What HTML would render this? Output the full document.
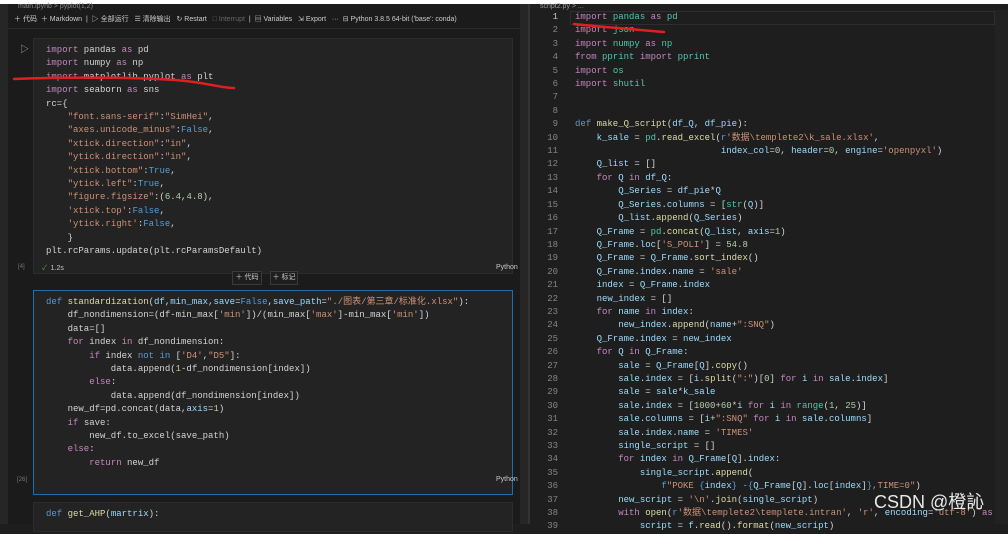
<!DOCTYPE html>
<html><head><meta charset="utf-8"><style>
*{margin:0;padding:0;box-sizing:border-box}
body{width:1008px;height:524px;overflow:hidden;background:#1e1e1e;position:relative;font-family:"Liberation Sans","Noto Sans CJK SC",sans-serif}
.mono{font-family:"Liberation Mono","Noto Sans CJK SC",monospace;font-size:9px;line-height:13.4px;white-space:pre;color:#d4d4d4}
.abs{position:absolute}
.k{color:#c586c0}.m{color:#4ec9b0}.s{color:#ce9178}.b{color:#569cd6}.f{color:#dcdcaa}.v{color:#9cdcfe}.n{color:#b5cea8}
.ln{color:#858585;text-align:right;width:20px}
.small{font-size:7px;color:#c8c8c8}
</style></head><body>
<div class="abs" style="left:0;top:0;width:1008px;height:4px;background:#fff"></div>
<!-- left panel -->
<div class="abs" style="left:0;top:4px;width:528px;height:520px;background:#1b1b1b"></div>
<div class="abs" style="left:0;top:4px;width:8px;height:520px;background:#262626"></div>
<div class="abs" style="left:520px;top:4px;width:8px;height:520px;background:#262626"></div>
<div class="abs" style="left:528px;top:4px;width:2px;height:520px;background:#333"></div>
<div class="abs small" style="left:18px;top:3px;color:#888">main.ipynb &gt; pyplot(1,2)</div>
<div class="abs small" style="left:14px;top:14px;white-space:nowrap;color:#ccc">＋ 代码 &nbsp;＋ Markdown &nbsp;| &nbsp;▷ 全部运行 &nbsp; ☰ 清除输出 &nbsp; ↻ Restart &nbsp; <span style="color:#666">□ Interrupt</span> &nbsp;| &nbsp;▤ Variables &nbsp; ⇲ Export &nbsp; ··· &nbsp;⊟ Python 3.8.5 64-bit ('base': conda)</div>
<div class="abs" style="left:8px;top:28px;width:512px;height:1px;background:#2a2a2a"></div>
<div class="abs" style="left:20px;top:42px;color:#aaa;font-size:9px">▷</div>
<div class="abs" style="left:33px;top:38px;width:480px;height:236px;background:#232323;border:1px solid #2c2c2c"></div>
<div class="abs mono" style="left:46px;top:44px"><span class="k">import</span> pandas <span class="k">as</span> pd
<span class="k">import</span> numpy <span class="k">as</span> np
<span class="k">import</span> matplotlib.pyplot <span class="k">as</span> plt
<span class="k">import</span> seaborn <span class="k">as</span> sns
rc={
    <span class="s">"font.sans-serif"</span>:<span class="s">"SimHei"</span>,
    <span class="s">"axes.unicode_minus"</span>:<span class="b">False</span>,
    <span class="s">"xtick.direction"</span>:<span class="s">"in"</span>,
    <span class="s">"ytick.direction"</span>:<span class="s">"in"</span>,
    <span class="s">"xtick.bottom"</span>:<span class="b">True</span>,
    <span class="s">"ytick.left"</span>:<span class="b">True</span>,
    <span class="s">"figure.figsize"</span>:(<span class="n">6.4</span>,<span class="n">4.8</span>),
    <span class="s">'xtick.top'</span>:<span class="b">False</span>,
    <span class="s">'ytick.right'</span>:<span class="b">False</span>,
    }
plt.rcParams.update(plt.rcParamsDefault)</div>
<div class="abs small" style="left:18px;top:264px;color:#777;font-size:6px">[4]</div>
<div class="abs small" style="left:42px;top:263px"><span style="color:#4caf50">✓</span> &nbsp;1.2s</div>
<div class="abs small" style="left:496px;top:264px">Python</div>
<div class="abs small" style="left:232px;top:271px;width:30px;height:14px;border:1px solid #3a3a3a;background:#1e1e1e;text-align:center;line-height:12px">＋ 代码</div>
<div class="abs small" style="left:270px;top:271px;width:28px;height:14px;border:1px solid #3a3a3a;background:#1e1e1e;text-align:center;line-height:12px">＋ 标记</div>
<div class="abs" style="left:33px;top:290px;width:480px;height:205px;background:#232323;border:1px solid #1f6fb0"></div>
<div class="abs mono" style="left:46px;top:296px"><span class="b">def</span> <span class="f">standardization</span>(<span class="v">df</span>,<span class="v">min_max</span>,<span class="v">save</span>=<span class="b">False</span>,<span class="v">save_path</span>=<span class="s">"./图表/第三章/标准化.xlsx"</span>):
    df_nondimension=(df-min_max[<span class="s">'min'</span>])/(min_max[<span class="s">'max'</span>]-min_max[<span class="s">'min'</span>])
    data=[]
    <span class="k">for</span> index <span class="k">in</span> df_nondimension:
        <span class="k">if</span> index <span class="b">not</span> <span class="b">in</span> [<span class="s">'D4'</span>,<span class="s">"D5"</span>]:
            data.append(<span class="n">1</span>-df_nondimension[index])
        <span class="k">else</span>:
            data.append(df_nondimension[index])
    new_df=pd.concat(data,<span class="v">axis</span>=<span class="n">1</span>)
    <span class="k">if</span> save:
        new_df.to_excel(save_path)
    <span class="k">else</span>:
        <span class="k">return</span> new_df</div>
<div class="abs small" style="left:17px;top:477px;color:#777;font-size:6px">[26]</div>
<div class="abs small" style="left:496px;top:476px">Python</div>
<div class="abs" style="left:33px;top:502px;width:480px;height:30px;background:#232323;border:1px solid #2c2c2c"></div>
<div class="abs mono" style="left:46px;top:508px"><span class="b">def</span> <span class="f">get_AHP</span>(<span class="v">martrix</span>):</div>
<!-- right panel -->
<div class="abs small" style="left:540px;top:3px;color:#999">script2.py &gt; ...</div>
<div class="abs" style="left:570px;top:11px;width:425px;height:14px;border:1px solid #2e2e2e"></div>
<div class="abs" style="left:995px;top:10px;width:13px;height:514px;background:#222"></div>
<div class="abs mono ln" style="left:538px;top:11px"><span style="color:#c6c6c6">1</span>
2
3
4
5
6
7
8
9
10
11
12
13
14
15
16
17
18
19
20
21
22
23
24
25
26
27
28
29
30
31
32
33
34
35
36
37
38
39</div>
<div class="abs mono" style="left:575px;top:11px"><span class="k">import</span> <span class="m">pandas</span> <span class="k">as</span> <span class="m">pd</span>
<span class="k">import</span> <span class="m">json</span>
<span class="k">import</span> <span class="m">numpy</span> <span class="k">as</span> <span class="m">np</span>
<span class="k">from</span> <span class="m">pprint</span> <span class="k">import</span> <span class="m">pprint</span>
<span class="k">import</span> <span class="m">os</span>
<span class="k">import</span> <span class="m">shutil</span>


<span class="b">def</span> <span class="f">make_Q_script</span>(<span class="v">df_Q</span>, <span class="v">df_pie</span>):
    <span class="v">k_sale</span> = <span class="m">pd</span>.<span class="f">read_excel</span>(<span class="b">r</span><span class="s">'数据\templete2\k_sale.xlsx'</span>,
                           <span class="v">index_col</span>=<span class="n">0</span>, <span class="v">header</span>=<span class="n">0</span>, <span class="v">engine</span>=<span class="s">'openpyxl'</span>)
    <span class="v">Q_list</span> = []
    <span class="k">for</span> <span class="v">Q</span> <span class="k">in</span> <span class="v">df_Q</span>:
        <span class="v">Q_Series</span> = <span class="v">df_pie</span>*<span class="v">Q</span>
        <span class="v">Q_Series</span>.<span class="v">columns</span> = [<span class="m">str</span>(<span class="v">Q</span>)]
        <span class="v">Q_list</span>.<span class="f">append</span>(<span class="v">Q_Series</span>)
    <span class="v">Q_Frame</span> = <span class="m">pd</span>.<span class="f">concat</span>(<span class="v">Q_list</span>, <span class="v">axis</span>=<span class="n">1</span>)
    <span class="v">Q_Frame</span>.<span class="v">loc</span>[<span class="s">'S_POLI'</span>] = <span class="n">54.8</span>
    <span class="v">Q_Frame</span> = <span class="v">Q_Frame</span>.<span class="f">sort_index</span>()
    <span class="v">Q_Frame</span>.<span class="v">index</span>.<span class="v">name</span> = <span class="s">'sale'</span>
    <span class="v">index</span> = <span class="v">Q_Frame</span>.<span class="v">index</span>
    <span class="v">new_index</span> = []
    <span class="k">for</span> <span class="v">name</span> <span class="k">in</span> <span class="v">index</span>:
        <span class="v">new_index</span>.<span class="f">append</span>(<span class="v">name</span>+<span class="s">":SNQ"</span>)
    <span class="v">Q_Frame</span>.<span class="v">index</span> = <span class="v">new_index</span>
    <span class="k">for</span> <span class="v">Q</span> <span class="k">in</span> <span class="v">Q_Frame</span>:
        <span class="v">sale</span> = <span class="v">Q_Frame</span>[<span class="v">Q</span>].<span class="f">copy</span>()
        <span class="v">sale</span>.<span class="v">index</span> = [<span class="v">i</span>.<span class="f">split</span>(<span class="s">":"</span>)[<span class="n">0</span>] <span class="k">for</span> <span class="v">i</span> <span class="k">in</span> <span class="v">sale</span>.<span class="v">index</span>]
        <span class="v">sale</span> = <span class="v">sale</span>*<span class="v">k_sale</span>
        <span class="v">sale</span>.<span class="v">index</span> = [<span class="n">1000</span>+<span class="n">60</span>*<span class="v">i</span> <span class="k">for</span> <span class="v">i</span> <span class="k">in</span> <span class="m">range</span>(<span class="n">1</span>, <span class="n">25</span>)]
        <span class="v">sale</span>.<span class="v">columns</span> = [<span class="v">i</span>+<span class="s">":SNQ"</span> <span class="k">for</span> <span class="v">i</span> <span class="k">in</span> <span class="v">sale</span>.<span class="v">columns</span>]
        <span class="v">sale</span>.<span class="v">index</span>.<span class="v">name</span> = <span class="s">'TIMES'</span>
        <span class="v">single_script</span> = []
        <span class="k">for</span> <span class="v">index</span> <span class="k">in</span> <span class="v">Q_Frame</span>[<span class="v">Q</span>].<span class="v">index</span>:
            <span class="v">single_script</span>.<span class="f">append</span>(
                <span class="b">f</span><span class="s">"POKE </span><span class="b">{</span><span class="v">index</span><span class="b">}</span><span class="s"> -</span><span class="b">{</span><span class="v">Q_Frame</span>[<span class="v">Q</span>].<span class="v">loc</span>[<span class="v">index</span>]<span class="b">}</span><span class="s">,TIME=0"</span>)
        <span class="v">new_script</span> = <span class="s">'\n'</span>.<span class="f">join</span>(<span class="v">single_script</span>)
        <span class="k">with</span> <span class="f">open</span>(<span class="b">r</span><span class="s">'数据\templete2\templete.intran'</span>, <span class="s">'r'</span>, <span class="v">encoding</span>=<span class="s">'utf-8'</span>) <span class="k">as</span>
            <span class="v">script</span> = <span class="v">f</span>.<span class="f">read</span>().<span class="f">format</span>(<span class="v">new_script</span>)</div>
<div class="abs" style="left:874px;top:488px;font-size:18px;color:#e8e8e8;white-space:nowrap;font-family:'Liberation Sans','Noto Sans CJK SC',sans-serif">CSDN @橙訫</div>
<!-- red annotations -->
<svg class="abs" style="left:0;top:0" width="1008" height="524"><path d="M14 79 C60 77 130 77 175 80 C205 82 220 88 234 88" stroke="#e02020" stroke-width="2.5" fill="none" stroke-linecap="round"/><path d="M574 24 C590 26 620 28 664 32" stroke="#e02020" stroke-width="2.5" fill="none" stroke-linecap="round"/></svg>
</body></html>
